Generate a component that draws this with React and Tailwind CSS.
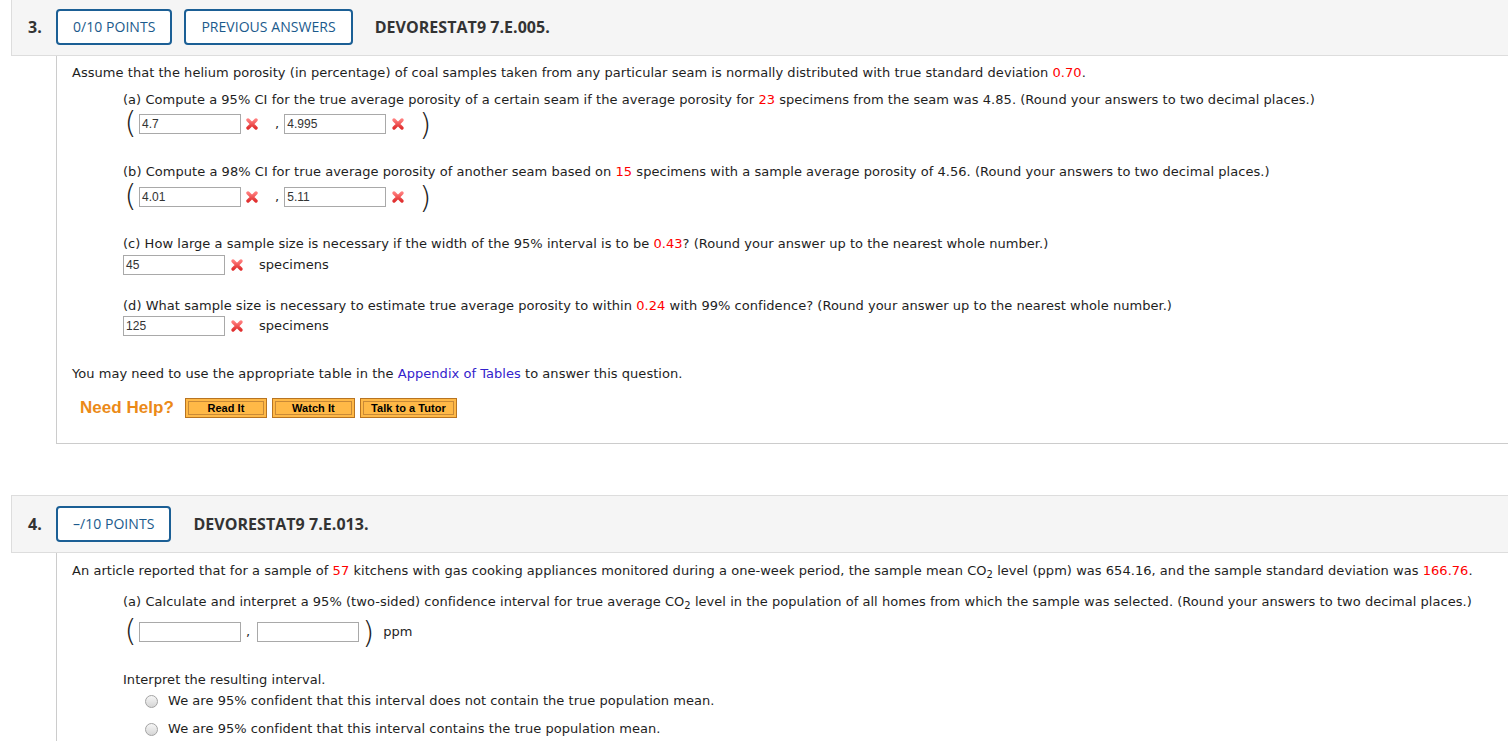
import React from 'react';

const body = { fontFamily: '"DejaVu Sans", Verdana, sans-serif' };
const head = { fontFamily: '"Open Sans", "Liberation Sans", sans-serif' };

const Red = ({ children }) => <span className="text-[#ff0000]">{children}</span>;

const Wrong = () => (
  <svg width="14" height="14" viewBox="0 0 14 14" className="shrink-0">
    <defs>
      <linearGradient id="xg" x1="0" y1="0" x2="0" y2="1">
        <stop offset="0" stopColor="#ff7b7b" />
        <stop offset="1" stopColor="#e02f2f" />
      </linearGradient>
    </defs>
    <path d="M3 3 L11 11 M11 3 L3 11" stroke="url(#xg)" strokeWidth="3.4" strokeLinecap="round" />
  </svg>
);

const Box = ({ value }) => (
  <div
    className="w-[102px] h-[20px] shrink-0 border border-[#a9a9a9] bg-white px-[2px] text-[12px] leading-[18px] text-[#333]"
    style={{ fontFamily: '"Liberation Sans", Arial, sans-serif' }}
  >
    {value}
  </div>
);

const Paren = ({ children }) => (
  <span
    className="text-[31px] leading-none text-[#222] -mt-[4px]"
    style={{ fontFamily: '"DejaVu Sans", sans-serif', fontWeight: 200 }}
  >
    {children}
  </span>
);

const Interval = ({ a, b, marked, unit }) => (
  <div className="flex items-center h-[30px]">
    <div className="w-[17px] flex justify-center">
      <Paren>(</Paren>
    </div>
    <Box value={a} />
    {marked && <div className="ml-[4px]"><Wrong /></div>}
    <span className={marked ? 'ml-[16px] mr-[5px]' : 'ml-[5px] mr-[7px]'}>,</span>
    <Box value={b} />
    {marked && <div className="ml-[5px]"><Wrong /></div>}
    <div className={marked ? 'ml-[14px] w-[10px]' : 'ml-[3px] w-[10px]'}>
      <Paren>)</Paren>
    </div>
    {unit && <span className="ml-[11px]">{unit}</span>}
  </div>
);

const Header = ({ num, first, chips, code }) => (
  <div
    className={`ml-[11px] h-[58px] flex items-center bg-[#f5f5f5] border-l border-b border-[#dddddd] ${first ? '-mt-[2px]' : 'border-t'}`}
    style={head}
  >
    <span className="w-[44px] pl-[16px] text-[16px] font-bold text-[#333]">{num}</span>
    {chips.map((c) => (
      <div
        key={c}
        className="h-[36px] mr-[12px] px-[15px] flex items-center rounded-[4px] border-2 border-[#1b5f95] text-[14px] text-[#1b5a8c] bg-white"
      >
        {c}
      </div>
    ))}
    <span className="ml-[10px] text-[16px] font-bold text-[#333]">{code}</span>
  </div>
);

const HelpBtn = ({ label, w }) => (
  <div className={`h-[20px] ${w} border border-[#b87421] bg-[#ffb947] p-[2px]`}>
    <div
      className="h-full border border-[#c98a37] flex items-center justify-center text-[11px] font-bold text-black"
      style={{ fontFamily: '"Liberation Sans", Arial, sans-serif' }}
    >
      {label}
    </div>
  </div>
);

const Radio = () => (
  <div className="w-[13px] h-[13px] rounded-full border border-[#a3a3a3] bg-gradient-to-b from-[#f6f6f6] to-[#d6d6d6] shrink-0" />
);

export default function App() {
  return (
    <div
      className="w-[1508px] min-h-[741px] bg-white text-[13px] leading-4 tracking-[0.04px] text-[#1e1e1e] overflow-hidden"
      style={body}
    >
      {/* Question 3 */}
      <Header num="3." first chips={['0/10 POINTS', 'PREVIOUS ANSWERS']} code="DEVORESTAT9 7.E.005." />
      <div className="ml-[56px] border-l border-b border-[#cccccc] pl-[15px] pt-[9px] pb-[25px]">
        <p>
          Assume that the helium porosity (in percentage) of coal samples taken from any particular seam is normally
          distributed with true standard deviation <Red>0.70</Red>.
        </p>
        <div className="pl-[51px]">
          <p className="mt-[11px]">
            (a) Compute a 95% CI for the true average porosity of a certain seam if the average porosity for <Red>23</Red>{' '}
            specimens from the seam was 4.85. (Round your answers to two decimal places.)
          </p>
          <div className="mt-[1px] -ml-[1px]">
            <Interval a="4.7" b="4.995" marked />
          </div>
          <p className="mt-[25px]">
            (b) Compute a 98% CI for true average porosity of another seam based on <Red>15</Red> specimens with a sample
            average porosity of 4.56. (Round your answers to two decimal places.)
          </p>
          <div className="mt-[2px] -ml-[1px]">
            <Interval a="4.01" b="5.11" marked />
          </div>
          <p className="mt-[24px]">
            (c) How large a sample size is necessary if the width of the 95% interval is to be <Red>0.43</Red>? (Round
            your answer up to the nearest whole number.)
          </p>
          <div className="mt-[3px] flex items-center h-[20px]">
            <Box value="45" />
            <div className="ml-[5px]"><Wrong /></div>
            <span className="ml-[15px]">specimens</span>
          </div>
          <p className="mt-[23px]">
            (d) What sample size is necessary to estimate true average porosity to within <Red>0.24</Red> with 99%
            confidence? (Round your answer up to the nearest whole number.)
          </p>
          <div className="mt-[2px] flex items-center h-[20px]">
            <Box value="125" />
            <div className="ml-[5px]"><Wrong /></div>
            <span className="ml-[15px]">specimens</span>
          </div>
        </div>
        <p className="mt-[30px]">
          You may need to use the appropriate table in the <span className="text-[#3322cc]">Appendix of Tables</span> to
          answer this question.
        </p>
        <div className="mt-[16px] ml-[8px] flex items-center h-[20px] gap-[5px]">
          <span
            className="mr-[6px] text-[17px] font-bold text-[#eb8a18]"
            style={{ fontFamily: '"Liberation Sans", Arial, sans-serif' }}
          >
            Need Help?
          </span>
          <HelpBtn label="Read It" w="w-[82px]" />
          <HelpBtn label="Watch It" w="w-[83px]" />
          <HelpBtn label="Talk to a Tutor" w="w-[97px]" />
        </div>
      </div>

      {/* Question 4 */}
      <div className="mt-[51px]">
        <Header num="4." chips={['–/10 POINTS']} code="DEVORESTAT9 7.E.013." />
      </div>
      <div className="ml-[56px] border-l border-[#cccccc] pl-[15px] pt-[10px] pb-[20px]">
        <p>
          An article reported that for a sample of <Red>57</Red> kitchens with gas cooking appliances monitored during a
          one-week period, the sample mean CO<sub className="text-[10px]">2</sub> level (ppm) was 654.16, and the sample
          standard deviation was <Red>166.76</Red>.
        </p>
        <div className="pl-[51px]">
          <p className="mt-[15px]">
            (a) Calculate and interpret a 95% (two-sided) confidence interval for true average CO
            <sub className="text-[10px]">2</sub> level in the population of all homes from which the sample was selected.
            (Round your answers to two decimal places.)
          </p>
          <div className="mt-[7px] -ml-[1px]">
            <Interval a="" b="" unit="ppm" />
          </div>
          <p className="mt-[25px]">Interpret the resulting interval.</p>
          <div className="mt-[5px] ml-[22px] flex items-center gap-[10px]">
            <Radio />
            <span>We are 95% confident that this interval does not contain the true population mean.</span>
          </div>
          <div className="mt-[12px] ml-[22px] flex items-center gap-[10px]">
            <Radio />
            <span>We are 95% confident that this interval contains the true population mean.</span>
          </div>
        </div>
      </div>
    </div>
  );
}
